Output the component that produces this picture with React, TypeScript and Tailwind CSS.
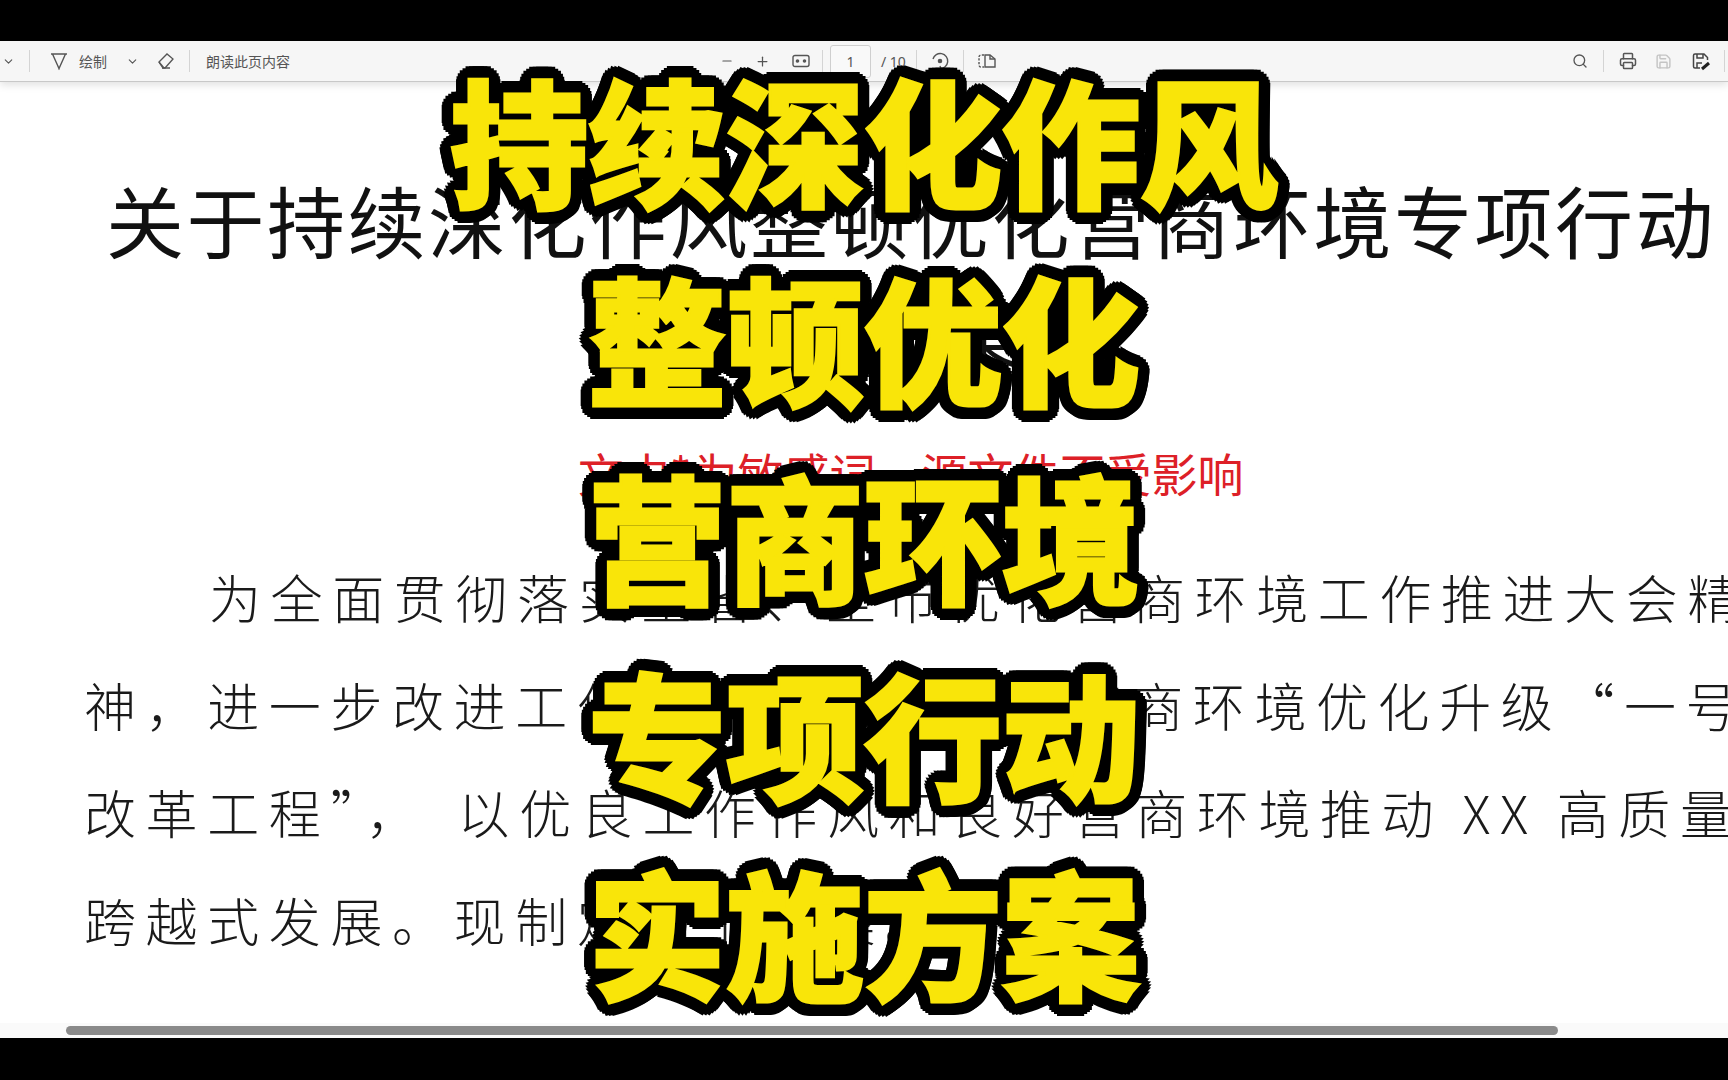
import { ChevronDown, Minus, Plus, Printer, Save, Search } from "lucide-react";

const Sep = () => <div className="w-px h-[22px] bg-[#d4d4d4]" />;

const DrawIcon = () => (
    <svg width="20" height="20" viewBox="0 0 20 20" fill="none" stroke="#555" strokeWidth="1.4">
        <path d="M2 3h16M3.5 3L10 17.5 16.5 3M10 17.5v1" />
    </svg>
);

const EraserIcon = () => (
    <svg width="20" height="20" viewBox="0 0 20 20" fill="none" stroke="#555" strokeWidth="1.3">
        <path d="M3 11l8-8 6 5-8 9H7z" />
        <path d="M3 11l5 6M6 17h8" />
    </svg>
);

const FitIcon = () => (
    <svg width="18" height="14" viewBox="0 0 18 14" fill="none" stroke="#555" strokeWidth="1.4">
        <rect x="1" y="1.5" width="16" height="11" rx="2" />
        <circle cx="5.5" cy="7" r="1.1" fill="#555" />
        <circle cx="12.5" cy="7" r="1.1" fill="#555" />
    </svg>
);

const RotateIcon = () => (
    <svg width="20" height="20" viewBox="0 0 20 20" fill="none" stroke="#555" strokeWidth="1.4">
        <path d="M3 8a7.5 7.5 0 1 1 7 9.5" />
        <circle cx="10" cy="10" r="1.6" fill="#555" />
        <path d="M10 15l1 3-3 1" />
    </svg>
);

const PageViewIcon = () => (
    <svg width="18" height="16" viewBox="0 0 18 16" fill="none" stroke="#555" strokeWidth="1.4">
        <path d="M6 2H3a2 2 0 0 0-2 2v8a2 2 0 0 0 2 2h3" strokeDasharray="2.2 1.4" />
        <path d="M7 2h5l5 4v8H7z" />
        <path d="M12 2v4h5" />
    </svg>
);

const SaveAsIcon = () => (
    <svg width="20" height="20" viewBox="0 0 20 20" fill="none" stroke="#444" strokeWidth="1.5">
        <path d="M9 17H4a1.5 1.5 0 0 1-1.5-1.5v-11A1.5 1.5 0 0 1 4 3h9l3.5 3.5V9" />
        <path d="M6 3v4h6V3M6 17v-5h5" />
        <path d="M11 18l7-6" stroke="#222" strokeWidth="3" />
    </svg>
);

const Toolbar = () => (
    <div className="h-[41px] shrink-0 flex items-center bg-[#f6f6f6] border-b border-[#c8c8c8] shadow-[0_3px_8px_rgba(0,0,0,0.12)] text-[#555] text-[14px] relative z-10">
        <ChevronDown size={13} className="ml-[2px]" />
        <div className="ml-[14px]"><Sep /></div>
        <div className="ml-[19px]"><DrawIcon /></div>
        <span className="ml-[10px]">绘制</span>
        <ChevronDown size={13} className="ml-[19px]" />
        <div className="ml-[17px]"><EraserIcon /></div>
        <div className="ml-[13px]"><Sep /></div>
        <span className="ml-[16px]">朗读此页内容</span>
        <Minus size={14} className="ml-[430px]" />
        <Plus size={15} className="ml-[21px]" />
        <div className="ml-[22px]"><FitIcon /></div>
        <div className="ml-[12px]"><Sep /></div>
        <div className="ml-[7px] w-[41px] h-[33px] flex items-center justify-center border border-[#cfcfcf] rounded-[3px] bg-[#f9f9f9]">1</div>
        <span className="ml-[10px]">/ 10</span>
        <div className="ml-[10px]"><Sep /></div>
        <div className="ml-[13px]"><RotateIcon /></div>
        <div className="ml-[13px]"><Sep /></div>
        <div className="ml-[14px]"><PageViewIcon /></div>
        <Search size={16} className="ml-[576px]" />
        <div className="ml-[15px]"><Sep /></div>
        <Printer size={18} className="ml-[15px]" />
        <Save size={17} className="ml-[18px] text-[#c4c4c4]" />
        <div className="ml-[19px]"><SaveAsIcon /></div>
        <div className="ml-[13px]"><Sep /></div>
    </div>
);

const Doc = () => (
    <div className="flex-1 min-h-0 bg-white overflow-hidden font-['Noto_Sans_CJK_SC',sans-serif] whitespace-nowrap">
        <div className="mt-[82px] ml-[106px] text-[78px] leading-[110px] tracking-[2.5px] text-[#111]">
            关于持续深化作风整顿优化营商环境专项行动
        </div>
        <div className="text-center text-[78px] leading-[110px] tracking-[2.5px] text-[#111]">实施方案</div>
        <div className="mt-[58px] ml-[578px] text-[46px] leading-[60px] text-[#dd2027]">文中*为敏感词，源文件不受影响</div>
        <div className="mt-[41px] ml-[84px] text-[52px] leading-[107.6px] tracking-[9.6px] font-light text-[#1a1a1a]">
            <div className="pl-[125px]">为全面贯彻落实全省、全市优化营商环境工作推进大会精</div>
            <div>神，进一步改进工作作风，推动全市营商环境优化升级“一号</div>
            <div>
                改革工程”，<span className="ml-[30px]">以优良工作作风和良好营商环境推动</span>
                <span className="mx-[19px]">XX</span>高质量
            </div>
            <div>跨越式发展。现制定如下方案。</div>
        </div>
    </div>
);

const Scrollbar = () => (
    <div className="h-[15px] shrink-0 bg-[#fafafa] pt-[3px] pl-[66px]">
        <div className="w-[1492px] h-[9px] rounded-full bg-[#8a8a8a]" />
    </div>
);

const lines = ["持续深化作风", "整顿优化", "营商环境", "专项行动", "实施方案"];

export default function App() {
    return (
        <div lang="zh-CN" className="relative w-[1728px] h-[1080px] bg-black overflow-hidden flex flex-col">
            <div className="h-[41px] shrink-0 bg-black" />
            <Toolbar />
            <Doc />
            <Scrollbar />
            <div className="h-[42px] shrink-0 bg-black" />

            {/* outline is a ring of shadows so the corners stay round, a text stroke spikes here */}
            <div className="absolute inset-0 z-20 flex flex-col items-center pt-[38px] font-['Noto_Sans_CJK_SC',sans-serif] font-black text-[138px] leading-[198px] text-[#f9e509] [-webkit-text-stroke:3px_#f9e509] [text-shadow:13px_0_0_#000,12.6px_3.4px_0_#000,11.3px_6.5px_0_#000,9.2px_9.2px_0_#000,6.5px_11.3px_0_#000,3.4px_12.6px_0_#000,0_13px_0_#000,-3.4px_12.6px_0_#000,-6.5px_11.3px_0_#000,-9.2px_9.2px_0_#000,-11.3px_6.5px_0_#000,-12.6px_3.4px_0_#000,-13px_0_0_#000,-12.6px_-3.4px_0_#000,-11.3px_-6.5px_0_#000,-9.2px_-9.2px_0_#000,-6.5px_-11.3px_0_#000,-3.4px_-12.6px_0_#000,0_-13px_0_#000,3.4px_-12.6px_0_#000,6.5px_-11.3px_0_#000,9.2px_-9.2px_0_#000,11.3px_-6.5px_0_#000,12.6px_-3.4px_0_#000,6px_0_0_#000,4.2px_4.2px_0_#000,0_6px_0_#000,-4.2px_4.2px_0_#000,-6px_0_0_#000,-4.2px_-4.2px_0_#000,0_-6px_0_#000,4.2px_-4.2px_0_#000]">
                {lines.map((line) => (
                    <div key={line}>{line}</div>
                ))}
            </div>
        </div>
    );
}
